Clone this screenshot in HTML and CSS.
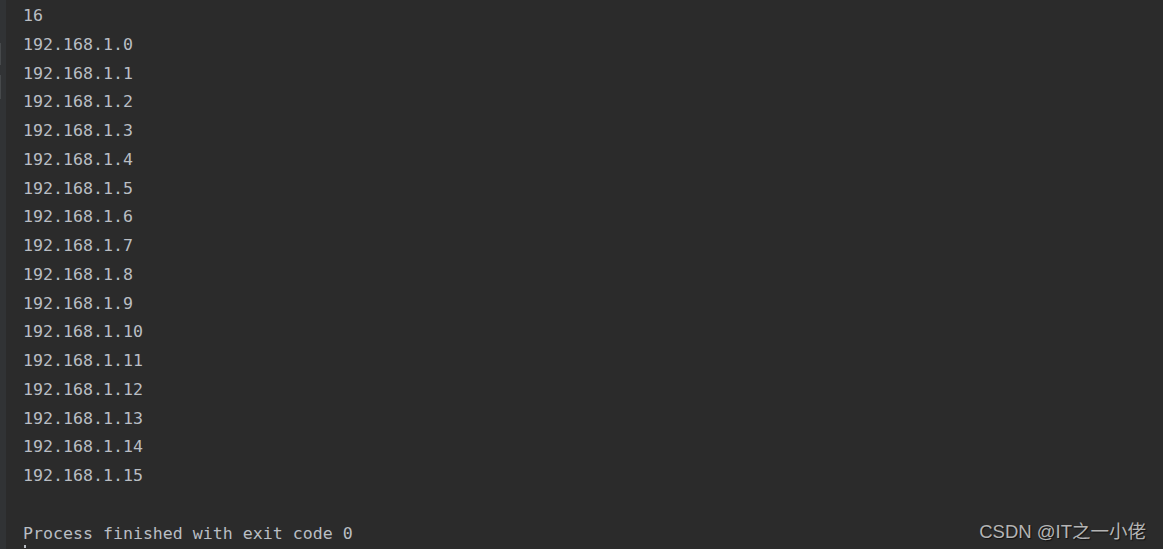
FILE: index.html
```html
<!DOCTYPE html>
<html lang="zh">
<head>
  <meta charset="UTF-8">
  <meta name="viewport" content="width=device-width, initial-scale=1.0">
  <title>Run console</title>
  <link rel="stylesheet" href="styles.css">
</head>
<body>
  <div class="window">
    <div class="gutter">
      <span class="mark mark-a"></span>
      <span class="mark mark-b"></span>
    </div>
    <div class="console">
      <div class="line">16</div>
      <div class="line">192.168.1.0</div>
      <div class="line">192.168.1.1</div>
      <div class="line">192.168.1.2</div>
      <div class="line">192.168.1.3</div>
      <div class="line">192.168.1.4</div>
      <div class="line">192.168.1.5</div>
      <div class="line">192.168.1.6</div>
      <div class="line">192.168.1.7</div>
      <div class="line">192.168.1.8</div>
      <div class="line">192.168.1.9</div>
      <div class="line">192.168.1.10</div>
      <div class="line">192.168.1.11</div>
      <div class="line">192.168.1.12</div>
      <div class="line">192.168.1.13</div>
      <div class="line">192.168.1.14</div>
      <div class="line">192.168.1.15</div>
      <div class="line"></div>
      <div class="line">Process finished with exit code 0</div>
      <span class="caret"></span>
    </div>
  </div>

  <div class="watermark">CSDN @IT之一小佬</div>
</body>
</html>
```

FILE: styles.css
```css
html, body {
  margin: 0;
  height: 100%;
  overflow: hidden;
}
body {
  background: #2b2b2b;
}
.window {
  display: flex;
  height: 100%;
}
.gutter {
  width: 6px;
  flex: none;
  background: #313335;
  display: flex;
  flex-direction: column;
}
.mark {
  display: block;
  width: 1px;
  background: #46494b;
}
.mark-a {
  margin-top: 43px;
  height: 22px;
}
.mark-b {
  margin-top: 10px;
  height: 24px;
}
.console {
  padding: 2px 0 0 17px;
  font-family: "DejaVu Sans Mono", "Liberation Mono", monospace;
  font-size: 16.6px;
  line-height: 28.75px;
  color: #b9bec4;
}
.line {
  height: 28.75px;
  white-space: pre;
}
.caret {
  display: block;
  width: 2px;
  height: 3px;
  margin: -3px 0 0 1px;
  background: #b9bec4;
}
.watermark {
  position: absolute;
  right: 17px;
  bottom: 6px;
  font-family: "Liberation Sans", "Noto Sans CJK SC", sans-serif;
  font-size: 18.5px;
  color: #b4b4b4;
  text-shadow: 1px 1px 1px rgba(0, 0, 0, 0.6);
}
```
